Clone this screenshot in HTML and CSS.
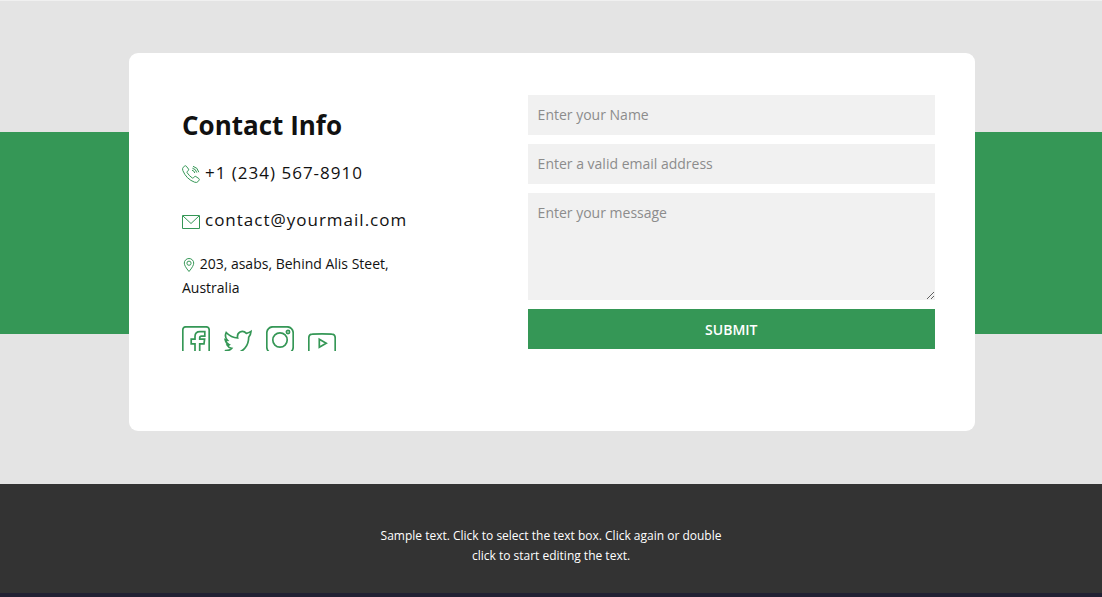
FILE: index.html
```html
<!DOCTYPE html>
<html lang="en">
    <head>
        <meta charset="UTF-8">
        <meta name="viewport" content="width=device-width, initial-scale=1.0">
        <link rel="stylesheet" href="styles.css">
        <title>Contact</title>
    </head>
    <body>
        <section class="contact">
            <div class="card">
                <div class="info">
                    <h2>Contact Info</h2>
                    <p class="line">
                        <svg class="icon" viewBox="0 0 18 18" aria-hidden="true">
                            <path d="M1.2 2.3 L2.8 1 Q3.6 .4 4.3 1.2 L6.5 4.1 Q7 5 6.3 5.6 L5.2 6.5 Q4.7 7 5.1 7.7 Q7.4 11 10.3 13 Q11 13.3 11.5 12.8 L12.4 11.7 Q13 11 13.8 11.5 L16.9 13.6 Q17.7 14.3 17.1 15.1 L15.9 16.7 Q14.9 17.9 12.6 17.2 Q4.3 14.1 .8 5.5 Q.1 3.5 1.2 2.3 Z" />
                            <path d="M10 5.2 Q12.3 5.7 12.8 8 M10.4 3.2 Q14 4 14.8 7.6 M11 1.3 Q15.8 2.4 16.8 7.2" />
                        </svg>
                        <a href="tel:+12345678910">+1 (234) 567-8910</a>
                    </p>
                    <p class="line">
                        <svg class="icon" viewBox="0 0 18 18" aria-hidden="true">
                            <path d="M.5 3.5 H17.5 V16.5 H.5 Z M1 4 L9 11.5 L17 4" />
                        </svg>
                        <a href="mailto:contact@yourmail.com">contact@yourmail.com</a>
                    </p>
                    <p class="address">
                        <svg class="icon-small" viewBox="0 0 14 14" aria-hidden="true">
                            <path d="M7 13.5 Q2.3 8 2.3 5.1 A4.7 4.6 0 0 1 11.7 5.1 Q11.7 8 7 13.5 Z" />
                            <circle cx="7" cy="5.2" r="2.1" />
                        </svg>
                        203, asabs, Behind Alis Steet, Australia
                    </p>
                    <div class="social">
                        <a href="#" aria-label="Facebook">
                            <svg viewBox="0 0 28 28">
                                <rect x=".8" y=".8" width="26.4" height="26.4" rx="3" />
                                <path d="M13 27 V17.8 H9.2 V13.2 H13 V10.5 Q13 5.6 18 5.6 H22.8 V10.2 H19.4 Q17.7 10.2 17.7 12 V13.2 H22.6 L22 17.8 H17.7 V27" />
                            </svg>
                        </a>
                        <a href="#" aria-label="Twitter">
                            <svg viewBox="0 0 28 28">
                                <path d="M.9 24.6 Q5.4 24.9 7.6 22.4 Q4.7 22 3.2 19.2 Q4.5 19.3 5.2 18.8 Q2 17.4 1.2 13.8 Q2.5 14.5 3.5 14.4 Q.2 11 2.2 6.5 Q7.2 11.8 13.6 12 Q12.8 7.8 16 6 Q19.6 4.4 22.4 7.4 Q24.6 6.9 27 5.4 Q26.9 8.4 24.7 11.2 C24.7 18.5 20.2 27 10 27 Q5 27 .9 24.6 Z" />
                            </svg>
                        </a>
                        <a href="#" aria-label="Instagram">
                            <svg viewBox="0 0 28 28">
                                <rect x=".8" y=".8" width="26.4" height="26.4" rx="6" />
                                <circle cx="14" cy="14" r="7.2" />
                                <circle cx="22" cy="6" r="1.6" />
                            </svg>
                        </a>
                        <a href="#" aria-label="YouTube">
                            <svg viewBox="0 0 28 28">
                                <path d="M.8 27 V12 Q.8 8.4 4.3 8.2 Q14 7.4 23.7 8.2 Q27.2 8.4 27.2 12 V27" />
                                <path d="M11.3 13.2 L18.2 17.2 L11.3 21.2 Z" />
                            </svg>
                        </a>
                    </div>
                </div>
                <form class="form" action="#" method="post">
                    <input type="text" name="name" placeholder="Enter your Name" aria-label="Name">
                    <input type="email" name="email" placeholder="Enter a valid email address" aria-label="Email">
                    <textarea name="message" placeholder="Enter your message" aria-label="Message"></textarea>
                    <button type="submit">SUBMIT</button>
                </form>
            </div>
        </section>
        <footer class="footer">
            <p>Sample text. Click to select the text box. Click again or double click to start editing the text.</p>
        </footer>
    </body>
</html>
```
FILE: styles.css
```css
* {
    box-sizing: border-box;
}

body {
    margin: 0;
    font-family: "Open Sans", sans-serif;
    font-size: 14px;
    color: #111;
    background-color: #222133;
}

h2,
p {
    margin: 0;
}

a {
    color: inherit;
    text-decoration: none;
}

svg {
    fill: none;
    stroke: #359756;
}

/* green band runs behind the card */
.contact {
    padding: 52px 24px 53px 26px;
    border-top: 1px solid #f0f0f0;
    background: linear-gradient(#359756, #359756) 0 131px / 100% 202px no-repeat #e4e4e4;
}

.card {
    display: grid;
    grid-template-columns: 5fr 8fr;
    column-gap: 91px;
    max-width: 846px;
    margin: 0 auto;
    padding: 42px 40px 80px 53px;
    border-radius: 9px;
    background-color: #fff;
}

.info h2 {
    margin-top: 12px;
    font-size: 26px;
    font-weight: 700;
    line-height: 36px;
}

.line {
    display: flex;
    align-items: center;
    gap: 5px;
    margin-top: 17px;
    font-size: 17px;
    line-height: 26px;
    letter-spacing: 1px;
    white-space: nowrap;
}

.line + .line {
    margin-top: 21px;
}

.icon {
    flex: none;
    width: 18px;
    height: 18px;
    margin-top: 2px;
}

.address {
    margin-top: 19px;
    line-height: 24px;
}

.icon-small {
    width: 14px;
    height: 14px;
    vertical-align: -3px;
}

/* icons are cut off at the bottom of the row */
.social {
    display: flex;
    gap: 14px;
    height: 25px;
    margin-top: 26px;
    overflow: hidden;
}

.social svg {
    display: block;
    width: 28px;
    height: 28px;
    stroke-width: 1.7;
}

.form {
    display: flex;
    flex-direction: column;
    gap: 9px;
}

.form input,
.form textarea {
    width: 100%;
    height: 40px;
    margin: 0;
    padding: 10px 10px 11px;
    border: 0;
    border-radius: 0;
    background-color: #f1f1f1;
    font: inherit;
    line-height: 20px;
}

.form textarea {
    height: 107px;
    resize: vertical;
}

.form ::placeholder {
    color: #8c8c8c;
    opacity: 1;
}

.form button {
    height: 40px;
    border: 0;
    background-color: #359756;
    color: #fff;
    font: inherit;
    font-weight: 600;
    cursor: pointer;
}

.footer {
    padding: 42px 24px 27px;
    background-color: #333;
    color: #fff;
    font-size: 12px;
    line-height: 20px;
    text-align: center;
}

.footer p {
    max-width: 356px;
    margin: 0 auto;
}
```
